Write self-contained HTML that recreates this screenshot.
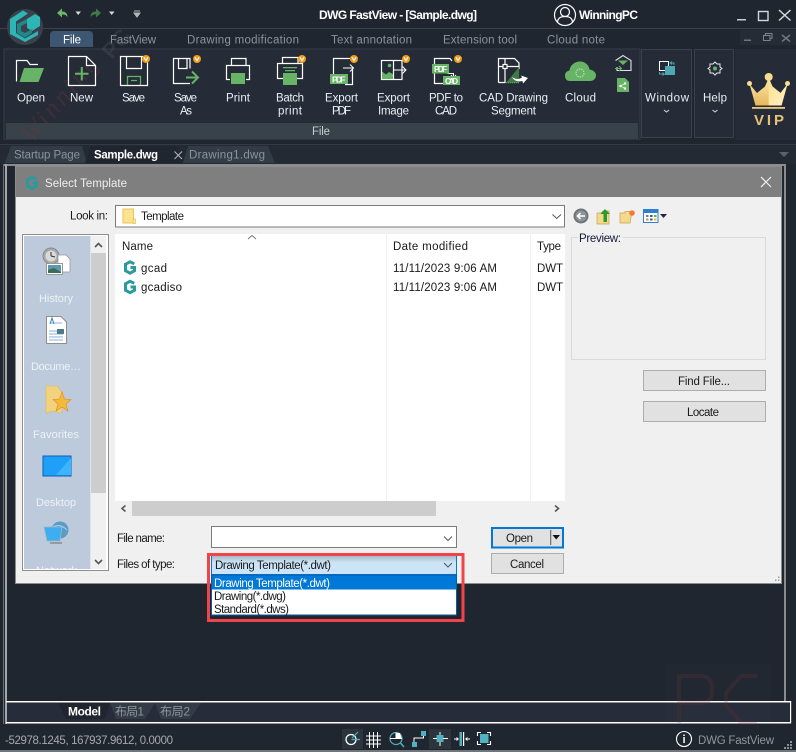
<!DOCTYPE html>
<html><head><meta charset="utf-8"><title>DWG FastView</title>
<style>
html,body{margin:0;padding:0;background:#20262f;width:796px;height:752px;overflow:hidden}
svg{display:block}
text{font-family:"Liberation Sans","Noto Sans CJK SC",sans-serif;font-size:12px}
.r{fill:#e8ebee}.tb{fill:#8b949b;font-size:11.5px}.d{fill:#1a1a1a;font-size:11.5px}.l{fill:#e9eef4;font-size:11.5px}
.s{fill:none;stroke:#fff;stroke-width:1.2}
.g{fill:#67b466}
</style></head><body>
<svg width="796" height="752" viewBox="0 0 796 752" xmlns="http://www.w3.org/2000/svg" shape-rendering="geometricPrecision">
<defs>
<linearGradient id="gold" x1="0" y1="0" x2="1" y2="1"><stop offset="0" stop-color="#fbe08e"/><stop offset="1" stop-color="#fff0c4"/></linearGradient>
<linearGradient id="gold2" x1="0" y1="0" x2="0" y2="1"><stop offset="0" stop-color="#fde9a8"/><stop offset="1" stop-color="#e7b65c"/></linearGradient>
<linearGradient id="sel" x1="0" y1="0" x2="0" y2="1"><stop offset="0" stop-color="#a9b9c7"/><stop offset=".35" stop-color="#cce4f7"/><stop offset="1" stop-color="#cce4f7"/></linearGradient>
<g id="badge"><circle r="4" fill="#f39a16"/><path d="M-2-1.8 0 1.8 2-1.8" fill="none" stroke="#fff" stroke-width="1.1"/></g>
<g id="G"><path d="M10.800 3.800 6.500 1.800 2 4.300V10.700L6.500 13.200 11 10.700V7.500H7" fill="none" stroke="#2a9a9c" stroke-width="3"/></g>
</defs>

<!-- base -->
<rect width="796" height="752" fill="#20262f"/>
<rect x="0" y="28" width="796" height="1" fill="#3a424c"/>

<!-- logo -->
<circle cx="25" cy="27" r="18" fill="#3a414a"/>
<path d="M10 19 23 10.500 28 13.500 16 21.500V33L25 38.500 38 31V35L25 42 10 34Z" fill="#2eb5b5"/>
<path d="M27 19 35 14 40 17V26L32 31 27 28Z" fill="#2eb5b5"/>
<path d="M17 24 27 19V23L21 26V31L25 33 32 29V33L25 37.500 17 33Z" fill="#20888c"/>

<!-- qat -->
<path d="M57 13 62 8.500V11.500C65 11.500 67.500 13 67.500 17 65.500 14.500 64 14.500 62 14.500V17.500Z" fill="#6cb56c"/>
<path d="M75.500 11.500H81L78.200 15Z" fill="#d8dadc"/>
<path d="M101 13 96 8.500V11.500C93 11.500 90.500 13 90.500 17 92.500 14.500 94 14.500 96 14.500V17.500Z" fill="#3f7a46"/>
<path d="M109 11.500H114.500L111.700 15Z" fill="#d8dadc"/>
<path d="M134 11H140M134 13H140L137 17Z" stroke="#b5b8bb" stroke-width="1" fill="#b5b8bb"/>

<!-- title -->
<text x="319" y="19" textLength="158" font-weight="700" fill="#fff">DWG FastView - [Sample.dwg]</text>
<circle cx="565" cy="15" r="10.500" class="s"/>
<circle cx="565" cy="12" r="4.500" class="s"/>
<path d="M557.500 22C558 17.500 561 16.500 565 16.500S572 17.500 572.500 22" class="s"/>
<text x="579" y="19" textLength="59" font-weight="700" fill="#fff">WinningPC</text>
<rect x="737" y="19" width="9" height="1.500" fill="#c9ccd0"/>
<rect x="758.500" y="11.500" width="9.500" height="9" fill="none" stroke="#d5d8da" stroke-width="1.400"/>
<path d="M779 10 790.500 20.500M790.500 10 779 20.500" stroke="#d5d8da" stroke-width="1.500"/>

<!-- tabs -->
<path d="M50 47V35Q50 31 54 31H89Q93 31 93 35V47Z" fill="#3d5672"/>
<text x="63" y="43.500" textLength="18" fill="#fff" style="font-size:11.5px">File</text>
<text x="110" y="43.500" textLength="46" class="tb">FastView</text>
<text x="187" y="43.500" textLength="112" class="tb">Drawing modification</text>
<text x="331" y="43.500" textLength="81" class="tb">Text annotation</text>
<text x="443" y="43.500" textLength="74" class="tb">Extension tool</text>
<text x="547" y="43.500" textLength="58" class="tb">Cloud note</text>
<rect x="740" y="30" width="56" height="15" fill="#262c35"/>
<rect x="744" y="39.500" width="7" height="1.500" fill="#6d747b"/>
<rect x="763.500" y="35.500" width="6.500" height="5" fill="none" stroke="#7d848a"/><path d="M765.500 35V33.500H772V38.500H770" fill="none" stroke="#7d848a"/>
<path d="M782 35 790 41.500M790 35 782 41.500" stroke="#6d747b" stroke-width="1.600"/>

<!-- ribbon -->
<rect x="4" y="49" width="636" height="91" fill="#252c38" stroke="#353d47" stroke-width="1"/>
<rect x="6" y="123" width="632" height="16" fill="#37424b"/>
<rect x="641.500" y="49.500" width="50" height="88" fill="#252c38" stroke="#39424c"/>
<rect x="694.500" y="49.500" width="39" height="88" fill="#252c38" stroke="#39424c"/>
<rect x="735" y="49" width="61" height="91" fill="#252c38"/>
<rect x="0" y="140" width="796" height="4" fill="#20262f"/>
<rect x="0" y="144" width="796" height="1" fill="#333a44"/>
<rect x="0" y="145" width="796" height="19" fill="#232a34"/>

<!-- watermark -->
<text transform="translate(32,145) rotate(-50)" textLength="105" style="font-family:'Liberation Serif',serif;font-size:26px;font-style:italic" fill="#7a3038" opacity=".32">Winning</text>
<text transform="translate(112,60) rotate(-50)" style="font-size:22px;font-weight:700" fill="#5a626b" opacity=".25">PC</text>

<!-- open -->
<path d="M16.500 81.500V60.500H27L30 64.500H38" class="s"/>
<path d="M24 68H44L38.500 82H19.500Z" class="g"/>
<!-- new -->
<path d="M68.500 56.500H86.500L95.500 65.500V85.500H68.500Z" class="s"/><path d="M86.500 56.500V65.500H95.500" class="s"/>
<path d="M81.800 67V80.500M75 73.800H88.500" stroke="#67b466" stroke-width="2" fill="none"/>
<!-- save -->
<path d="M120.500 56.500H147.500V85.500H120.500Z" class="s"/>
<path d="M126.500 56.500V68.500H141.500V56.500" class="s"/>
<path d="M127.500 85V76.500H140.500V85M131 80.500H137" fill="none" stroke="#67b466" stroke-width="1.300"/>
<use href="#badge" x="146" y="59"/>
<!-- save as -->
<path d="M190 68.500V58.500H173.500V83.500H190" class="s"/><path d="M178.500 59V68.500H187V59" class="s"/>
<path d="M186 77.500H197M192 71.500 198 77.500 192 83.500" fill="none" stroke="#67b466" stroke-width="2"/>
<use href="#badge" x="197" y="59"/>
<!-- print -->
<path d="M231.500 65.500V58.500H246V65.500" class="s"/>
<path d="M230 79.500H226.500V65.500H249.500V79.500H246" class="s"/>
<rect x="231" y="73" width="14" height="11" class="g"/>
<!-- batch -->
<path d="M282.500 63V57.500H298V63" class="s"/>
<path d="M283 78.500H277.500V63.500H302.500V78.500H297" class="s"/>
<rect x="283" y="67" width="14" height="1.300" class="g"/><rect x="285" y="70" width="10" height="1.300" class="g"/>
<rect x="283" y="73" width="14" height="12" class="g"/>
<use href="#badge" x="302" y="59"/>
<!-- export pdf -->
<path d="M333.500 74V58.500H350M352.500 69V84.500H345" class="s"/>
<path d="M343 68H353M350 64.500 353.500 68 350 71.500" fill="none" stroke="#fff" stroke-width="1"/>
<rect x="330" y="74" width="18" height="10" class="g"/>
<text x="332" y="82.500" textLength="13.500" style="font-size:8.500px;font-weight:700" fill="#fff">PDF</text>
<use href="#badge" x="354" y="59"/>
<!-- export image -->
<rect x="381.500" y="60.500" width="20.500" height="19" fill="none" stroke="#fff" stroke-width="1.200"/>
<path d="M393.500 60.500V79.500" class="s"/>
<path d="M382 79V71.500L386 74.500 389 72 393 74V79Z" class="g"/><circle cx="389.500" cy="65.500" r="1.800" class="g"/>
<path d="M394 70H405.500M402.500 66.500 406 70 402.500 73.500" fill="#252c38" stroke="#fff"/>
<use href="#badge" x="406" y="59"/>
<!-- pdf to cad -->
<path d="M434.500 66V58.500H450L452 61M434.500 73V83.500H444" class="s"/>
<path d="M448 71V73.500H453.500V77M451 75 453.500 78 456 75" fill="none" stroke="#fff" stroke-width="1"/>
<rect x="432" y="64" width="17" height="9.500" class="g"/>
<text x="434" y="72" textLength="13" style="font-size:8px;font-weight:700" fill="#fff">PDF</text>
<rect x="443" y="76" width="17" height="9" class="g"/>
<text x="445" y="84" textLength="13" style="font-size:8px;font-weight:700" fill="#fff">CAD</text>
<use href="#badge" x="458" y="59"/>
<!-- cad seg -->
<path d="M498.500 82.500V58.500H514.500L519 63V69" class="s"/><path d="M498.500 66.500H503M507 66.500H519M505 58.500V64M505 69V82.500H498.500" class="s"/>
<rect x="503" y="64.500" width="4" height="4" class="s"/>
<path d="M506 83 519 67V83Z" fill="#3f7a46"/>
<path d="M512 77C516 80 520 79 522 77.500L521 75.500 528 78 523 83.500 522.500 81C518 82 514 81 512 77Z" fill="#fff"/>
<path d="M506 82.800H520" stroke="#67b466" stroke-dasharray="1 1"/>
<!-- cloud -->
<path d="M570 81C566 81 565 78 565 75.500 565 72.500 567 71 569.500 70.500 570 65 575 61.500 580 61.500 585 61.500 589 65 589.500 69.500 593 70 596 72 596 75.500 596 78.500 593.500 81 590 81Z" class="g"/>
<circle cx="580" cy="73" r="4" fill="none" stroke="#b9dcb8" stroke-width="1.200" stroke-dasharray="1.500 1"/>
<!-- small -->
<path d="M615.500 60.500 623 55.500 631 60.500V70.500H617V67" fill="none" stroke="#dfe3e5" stroke-width="1.100"/>
<path d="M618 60.500H628L623 65Z" class="g"/>
<path d="M615 68.500H621M619 66 621.500 68.500 619 71" fill="none" stroke="#67b466"/>
<path d="M617 78H625L629 82V92H617Z" class="g"/>
<circle cx="620.500" cy="86" r="1.200" fill="#fff"/><circle cx="625" cy="83.500" r="1.200" fill="#fff"/><circle cx="625" cy="88.500" r="1.200" fill="#fff"/><path d="M620.500 86 625 83.500M620.500 86 625 88.500" stroke="#fff" stroke-width=".7"/>
<!-- window -->
<rect x="659.500" y="61.500" width="9" height="9" fill="none" stroke="#fff"/>
<rect x="665" y="66" width="10" height="9" fill="#4ea7b5"/>
<path d="M670 63H674V65M672 61.500 670 63 672 64.500M659.500 72V74H664M662.500 72.500 664.500 74 662.500 75.500" fill="none" stroke="#4ea7b5" stroke-width=".9"/>
<path d="M664 110 666.500 112 669 110" fill="none" stroke="#d8dadc"/>
<!-- help -->
<path d="M715 62 717 64H720V67L722 68.500 720 70V73H717L715 75 713 73H710V70L708 68.500 710 67V64H713Z" fill="none" stroke="#e8eaec"/>
<circle cx="715" cy="68.500" r="2" class="g"/>
<path d="M712.500 110 715 112 717.500 110" fill="none" stroke="#d8dadc"/>
<!-- crown -->
<path d="M749.500 84 757 93 765 86.500 768.700 78 772.500 86.500 780.500 93 787.500 84 781.500 105.500H755.500Z" fill="url(#gold2)"/>
<path d="M768.700 78 772.500 86.500 780.500 93 787.500 84 781.500 105.500H768.700Z" fill="url(#gold)"/>
<circle cx="749.500" cy="83.500" r="2.500" fill="#f8dc93"/><circle cx="768.700" cy="77" r="4" fill="#f8dc93"/><circle cx="787.500" cy="83.500" r="2.500" fill="#f8dc93"/>
<rect x="752" y="107" width="33" height="1.800" fill="#edc778"/>
<text x="754" y="125" textLength="30" style="font-size:15px;font-weight:700" fill="#e8c078">VIP</text>

<!-- ribbon labels -->
<text x="17" y="101.500" textLength="28" class="l">Open</text>
<text x="70" y="101.500" textLength="23" class="l">New</text>
<text x="122" y="101.500" textLength="23" class="l">Save</text>
<text x="174" y="101.500" textLength="23" class="l">Save</text>
<text x="180" y="114.500" textLength="12" class="l">As</text>
<text x="226" y="101.500" textLength="24" class="l">Print</text>
<text x="276" y="101.500" textLength="28" class="l">Batch</text>
<text x="278" y="114.500" textLength="24" class="l">print</text>
<text x="325" y="101.500" textLength="33" class="l">Export</text>
<text x="332" y="114.500" textLength="19" class="l">PDF</text>
<text x="377" y="101.500" textLength="33" class="l">Export</text>
<text x="378" y="114.500" textLength="31" class="l">Image</text>
<text x="429" y="101.500" textLength="34" class="l">PDF to</text>
<text x="435" y="114.500" textLength="22" class="l">CAD</text>
<text x="479" y="101.500" textLength="69" class="l">CAD Drawing</text>
<text x="491" y="114.500" textLength="45" class="l">Segment</text>
<text x="565" y="101.500" textLength="31" class="l">Cloud</text>
<text x="645" y="101.500" textLength="44" class="l">Window</text>
<text x="703" y="101.500" textLength="24" class="l">Help</text>
<text x="312" y="135" textLength="18" style="font-size:11.500px" fill="#c5cbd0">File</text>

<!-- doc tabs -->
<path d="M5 163 11 146H82L87 163Z" fill="#323c47"/>
<path d="M85 163 91 146H176L185 163Z" fill="#20262f"/>
<path d="M183 163 188 146H268L275 163Z" fill="#323c47"/>
<text x="14" y="158.500" textLength="66" class="tb">Startup Page</text>
<text x="94" y="158.500" textLength="64" font-weight="700" fill="#fff" style="font-size:11.5px">Sample.dwg</text>
<path d="M174.500 151.500 182 159M182 151.500 174.500 159" stroke="#aeb3b7" stroke-width="1.100"/>
<text x="189" y="158.500" textLength="76" class="tb">Drawing1.dwg</text>
<path d="M779 152H789L784 157Z" fill="#59616a"/>

<!-- canvas frame -->
<rect x="4" y="164" width="782" height="2" fill="#8c8c8c"/>
<rect x="3" y="164" width="1" height="560" fill="#6b6f73"/>
<rect x="5" y="164" width="2" height="560" fill="#a4a6a8"/>
<rect x="784" y="164" width="2" height="537" fill="#8c8c8c"/>
<rect x="6" y="701" width="784.500" height="1.500" fill="#fff"/>
<rect x="7" y="703" width="783" height="19" fill="#262c39"/>
<rect x="6" y="722" width="785" height="1.500" fill="#fff"/>
<rect x="790" y="701" width="1.200" height="22" fill="#fff"/>

<!-- PC watermark -->
<rect x="665" y="664" width="106" height="59" fill="#fff" opacity=".012"/>
<path d="M679 723V676H700Q712 676 712 688V692Q712 703 700 703H681" fill="none" stroke="#7a3038" stroke-width="4" opacity=".2"/>
<path d="M757 676H741L726 693V705L741 723H757" fill="none" stroke="#7a3038" stroke-width="4" opacity=".2"/>

<!-- model tabs -->
<path d="M58 703 66 719H105L110 703Z" fill="#20262f"/>
<path d="M110 703 116 719H145L155 703Z" fill="#333c46"/>
<path d="M155 703 161 719H190L201 703Z" fill="#333c46"/>
<text x="68" y="715.500" textLength="33" font-weight="700" fill="#fff">Model</text>
<text x="115" y="715.500" textLength="29" fill="#8b949b">布局1</text>
<text x="160" y="715.500" textLength="30" fill="#8b949b">布局2</text>

<!-- status -->
<text x="5" y="744" textLength="168" fill="#a5a9ad" style="font-size:11.5px">-52978.1245, 167937.9612, 0.0000</text>
<rect x="342" y="729" width="21" height="20" fill="#2c343e"/>
<circle cx="351" cy="739.500" r="5" fill="none" stroke="#fff" stroke-width="1.300"/>
<path d="M352 738 358 732M351.500 739.500H360" stroke="#4fb1c2" stroke-width="1.200"/>
<path d="M366 736H381M366 740H381M366 744H381M369.500 732V748M373.500 732V748M377.500 732V748" stroke="#fff" stroke-width="1"/>
<circle cx="396" cy="738.500" r="6" fill="none" stroke="#4fb1c2" stroke-width="1.200"/>
<path d="M390 738.500H402M396 738.500V732.500" stroke="#fff"/><path d="M396 733H400L401.500 738H396Z" fill="#fff"/>
<path d="M400.500 743 404 747" stroke="#4fb1c2" stroke-width="1.500"/>
<rect x="412" y="742" width="5" height="5" fill="#4fb1c2"/><rect x="421" y="731" width="5" height="5" fill="#4fb1c2"/>
<path d="M414 742V738H423.500V736" fill="none" stroke="#fff" stroke-width="1"/>
<rect x="429" y="729" width="22" height="20" fill="#2c343e"/>
<rect x="436.500" y="735" width="7" height="7" fill="#4fb1c2"/>
<path d="M433 738.500H437M443 738.500H448M440 732V735M440 742V746" stroke="#fff" stroke-width="1"/>
<rect x="459.500" y="732" width="2.500" height="14" fill="#4fb1c2"/><rect x="463" y="732" width="1.200" height="14" fill="#fff"/>
<path d="M454 739H458M456.500 737.500 458.300 739 456.500 740.500M470 739H466M467.500 737.500 465.700 739 467.500 740.500" fill="none" stroke="#fff" stroke-width=".9"/>
<rect x="480" y="734" width="8.500" height="9" fill="#4fb1c2"/>
<path d="M477.500 736V732.500H481M487 732.500H490.500V736M490.500 741V744.500H487M481 744.500H477.500V741" fill="none" stroke="#fff" stroke-width="1.100"/>
<circle cx="684" cy="739" r="7.500" fill="none" stroke="#fff" stroke-width="1.100"/>
<rect x="683.300" y="737" width="1.500" height="6" fill="#fff"/><rect x="683.300" y="734.500" width="1.500" height="1.500" fill="#fff"/>
<text x="698" y="744" textLength="76" fill="#8f979d" style="font-size:11.5px">DWG FastView</text>
<path d="M790 749h2v-2h-2zM787 749h2v-2h-2zM784 749h2v-2h-2zM790 746h2v-2h-2zM787 746h2v-2h-2zM790 743h2v-2h-2z" fill="#8c9196"/>
<rect x="0" y="750" width="796" height="2" fill="#70767c"/>

<!-- DIALOG -->
<rect x="15" y="166" width="767" height="418" fill="#8d8d8d"/>
<rect x="16" y="167" width="765" height="416" fill="#f0f0f0"/>
<rect x="16" y="167" width="765" height="30" fill="#7f7f7f"/>
<use href="#G" x="25.500" y="175.500"/>
<text x="45" y="187" textLength="82" fill="#eeeeee" style="font-size:11.5px">Select Template</text>
<path d="M761 177 771 187M771 177 761 187" stroke="#f2f2f2" stroke-width="1.200"/>

<text x="70" y="219.500" textLength="38" class="d">Look in:</text>
<rect x="115.500" y="205.500" width="449" height="21.500" fill="#fff" stroke="#7a7a7a"/>
<path d="M123 209H133.500V223H123Z" fill="#fde291" stroke="#e9c25c"/><path d="M133 219H135.500V223.500H133Z" fill="#fde291" stroke="#e9c25c" stroke-width=".7"/>
<text x="141" y="220" textLength="43" class="d">Template</text>
<path d="M552.500 214.500 556.700 218.500 561 214.500" fill="none" stroke="#555" stroke-width="1"/>

<circle cx="581" cy="216" r="7.500" fill="#6f7478"/><circle cx="581" cy="216" r="5.500" fill="#8d9296"/>
<path d="M585 216H578M580.500 213 577.500 216 580.500 219" fill="none" stroke="#fff" stroke-width="1.500"/>
<path d="M597 213H601L603 211H609V224H597Z" fill="#f2d98b" stroke="#caa14a" stroke-width=".7"/>
<path d="M605 209 600.500 214H603.500V222H607V214H610Z" fill="#2b9b2e"/>
<path d="M620 213H625V211.500H632L630 223H620Z" fill="#f2d98b" stroke="#caa14a" stroke-width=".7"/>
<circle cx="632" cy="213" r="2.800" fill="#f07a3a"/>
<rect x="643.500" y="209.500" width="14.500" height="13" fill="#fff" stroke="#2d7fd3"/><rect x="644" y="210" width="14" height="3" fill="#2d7fd3"/>
<rect x="646" y="215" width="2.500" height="2" fill="#4c7fd0"/><rect x="650" y="215" width="2.500" height="2" fill="#3f5d80"/><rect x="654" y="215" width="2.500" height="2" fill="#57b04f"/>
<rect x="646" y="218.500" width="2.500" height="2" fill="#e48a3c"/><rect x="650" y="218.500" width="2.500" height="2" fill="#3f5d80"/><rect x="654" y="218.500" width="2.500" height="2" fill="#e8b53a"/>
<path d="M660 214H667L663.500 218Z" fill="#1f2a38"/>

<!-- sidebar -->
<rect x="22.500" y="234.500" width="86" height="336" fill="#fff" stroke="#8f8f8f"/>
<rect x="24" y="236" width="66.500" height="333" fill="#bccadb"/>
<rect x="91" y="236" width="15" height="333" fill="#f0f0f0"/>
<rect x="91" y="253" width="15" height="240" fill="#cdcdcd"/>
<path d="M95 247 98.500 243.500 102 247M95 560 98.500 563.500 102 560" fill="none" stroke="#555" stroke-width="1.600"/>

<circle cx="51" cy="256" r="8" fill="#a8a8a8" stroke="#8b8b8b"/><circle cx="51" cy="256" r="5.500" fill="#d9d9d9"/><path d="M51 256V252M51 256 55 257" stroke="#333" stroke-width="1"/>
<path d="M58 255H66L70 259V272H58Z" fill="#fff" stroke="#999" stroke-width=".8"/>
<rect x="46.500" y="263.500" width="16" height="11" fill="#fff" stroke="#999"/><rect x="48" y="265" width="13" height="8" fill="#5d98ae"/><path d="M48 270 54 268 61 272V273H48Z" fill="#3e6b57"/>
<text x="39" y="302" textLength="34" fill="#eef2f6" style="font-size:11px">History</text>

<path d="M46.500 316.500H61L66.500 322V343.500H46.500Z" fill="#fff" stroke="#8f8f8f"/>
<path d="M50 323H62M49 331H63M49 334H63M49 337H63M49 340H63" stroke="#8fb0d8"/><path d="M50 324 52 318 54 324" stroke="#2d7fd3" fill="none"/>
<rect x="57" y="329" width="7" height="5" fill="#4a7a8c"/>
<text x="31" y="370" textLength="50" fill="#eef2f6" style="font-size:11px">Docume…</text>

<path d="M46 386H57L62 392V413L52 411 46 413Z" fill="#f3d27d" stroke="#e0b75a" stroke-width=".6"/>
<path d="M62 392 64.500 399 71 399.500 66 404 68 411 62 407 56 411 58 404 53 399.500 59.500 399Z" fill="#f6b93a" stroke="#d98c22" stroke-width=".6"/>
<text x="33" y="438" textLength="46" fill="#eef2f6" style="font-size:11px">Favorites</text>

<rect x="43" y="456" width="28" height="20" fill="#1ea0f8" stroke="#0d5eb5"/><path d="M56 475 71 458V475Z" fill="#3db4ff"/>
<text x="36" y="506" textLength="40" fill="#eef2f6" style="font-size:11px">Desktop</text>

<circle cx="60" cy="530" r="8.500" fill="#5c9cc4"/><path d="M53 527Q60 523 67 530" stroke="#a9d2ea" fill="none"/>
<path d="M44 527H62L60 541H47Z" fill="#3eaef0" stroke="#9db7c7" stroke-width=".8"/>
<rect x="50" y="542" width="12" height="2" fill="#9a9a9a"/>
<clipPath id="nw"><rect x="24" y="560" width="66" height="9.500"/></clipPath>
<g clip-path="url(#nw)"><text x="36" y="574" textLength="41" fill="#eef2f6" style="font-size:11px">Network</text></g>

<!-- list -->
<rect x="115" y="234" width="450" height="267" fill="#fff"/>
<rect x="386" y="234" width="1" height="267" fill="#eaf0f6"/>
<rect x="530" y="234" width="1" height="267" fill="#eaf0f6"/>
<path d="M248 239 252 235.500 256 239" fill="none" stroke="#777"/>
<text x="122" y="250" textLength="31" class="d">Name</text>
<text x="393" y="250" textLength="75" class="d">Date modified</text>
<text x="537" y="250" textLength="24" class="d">Type</text>
<use href="#G" x="123.500" y="260"/>
<text x="141" y="272" textLength="26" class="d">gcad</text>
<text x="393" y="272" textLength="104" class="d">11/11/2023 9:06 AM</text>
<text x="537" y="272" textLength="26" class="d">DWT</text>
<use href="#G" x="123.500" y="279.500"/>
<text x="141" y="291" textLength="41" class="d">gcadiso</text>
<text x="393" y="291" textLength="104" class="d">11/11/2023 9:06 AM</text>
<text x="537" y="291" textLength="26" class="d">DWT</text>
<rect x="115" y="501" width="450" height="15" fill="#f0f0f0"/>
<rect x="132" y="501" width="304" height="15" fill="#cdcdcd"/>
<path d="M125.500 505.500 122 508.500 125.500 511.500M555 505.500 558.500 508.500 555 511.500" fill="none" stroke="#555" stroke-width="1.600"/>

<!-- file name -->
<text x="117" y="542" textLength="48" class="d">File name:</text>
<rect x="211.500" y="526.500" width="245" height="21" fill="#fff" stroke="#7a7a7a"/>
<path d="M444 536.500 448 540.500 452 536.500" fill="none" stroke="#555"/>
<text x="117" y="568" textLength="58" class="d">Files of type:</text>

<!-- buttons -->
<rect x="492" y="528" width="71" height="19.500" fill="#e1e1e1" stroke="#0078d7" stroke-width="2"/>
<rect x="550" y="530" width="1.300" height="15" fill="#777"/>
<path d="M552.500 535H560L556.200 539.500Z" fill="#111"/>
<text x="506" y="542" textLength="27" class="d">Open</text>
<rect x="491.500" y="553.500" width="72" height="20" fill="#e1e1e1" stroke="#adadad"/>
<text x="510" y="568" textLength="34" class="d">Cancel</text>

<!-- dropdown -->
<rect x="208.500" y="554.500" width="254.500" height="66" fill="none" stroke="#f0444a" stroke-width="3"/>
<rect x="211.500" y="556" width="245" height="18.500" fill="url(#sel)"/>
<path d="M211.500 556V574.500H456.500V556" fill="none" stroke="#0078d7"/>
<text x="215" y="569" textLength="116" class="d">Drawing Template(*.dwt)</text>
<path d="M444 563 448 567 452 563" fill="none" stroke="#555"/>
<rect x="211.500" y="575" width="245" height="40" fill="#fff" stroke="#0a5ca6"/>
<rect x="212" y="575.500" width="244" height="14" fill="#0078d7"/>
<text x="214" y="587" textLength="116" fill="#fff" style="font-size:11.5px">Drawing Template(*.dwt)</text>
<text x="214" y="600" textLength="72" class="d">Drawing(*.dwg)</text>
<text x="214" y="613" textLength="75" class="d">Standard(*.dws)</text>

<!-- preview -->
<rect x="571.500" y="237.500" width="194" height="122" fill="none" stroke="#d9d9d9"/>
<rect x="578" y="232" width="45" height="10" fill="#f0f0f0"/>
<text x="579" y="242" textLength="42" style="font-size:11.500px" fill="#1a1a3a">Preview:</text>
<rect x="643.500" y="370.500" width="122" height="20" fill="#e1e1e1" stroke="#adadad"/>
<text x="678" y="385" textLength="52" class="d">Find File...</text>
<rect x="643.500" y="401.500" width="122" height="20" fill="#e1e1e1" stroke="#adadad"/>
<text x="687" y="416" textLength="32" class="d">Locate</text>
<path d="M778 581h1.500v-1.500h-1.500zM775 581h1.500v-1.500h-1.500zM778 578h1.500v-1.500h-1.500z" fill="#9a9a9a"/>
</svg>
</body></html>
